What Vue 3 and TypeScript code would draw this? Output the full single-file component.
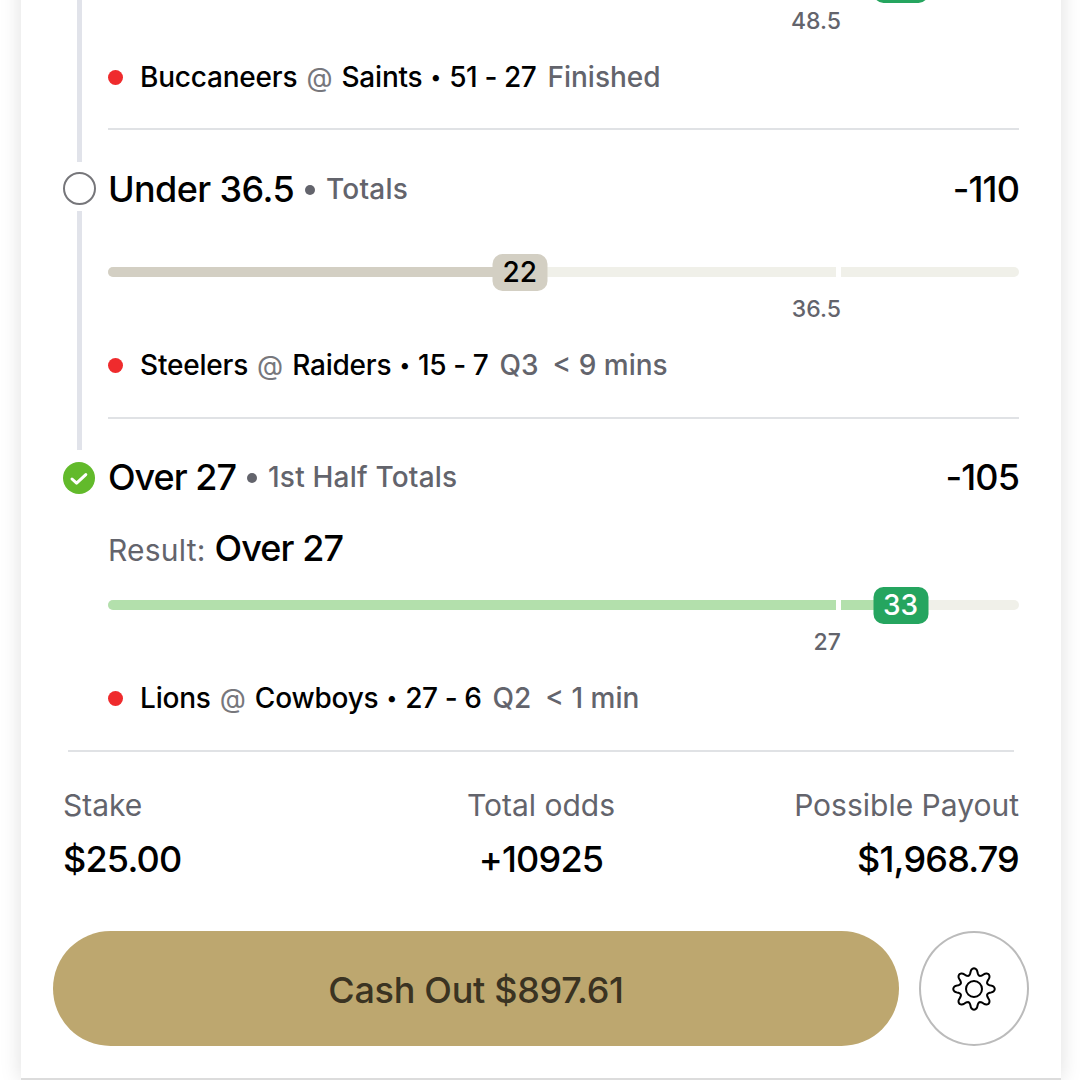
<script setup lang="ts">
interface Leg {
  pick: string
  market: string
  odds: string
  state: 'open' | 'won'
  result?: string
  value: number
  line: string
  valuePct: number
  linePct: number
  tone: 'neutral' | 'green'
  home: string
  away: string
  score: string
  status: string[]
  rail: boolean
}

const legs: Leg[] = [
  { pick: 'Over 48.5', market: 'Totals', odds: '-110', state: 'won', value: 78, line: '48.5', valuePct: 87, linePct: 79.9, tone: 'green', home: 'Buccaneers', away: 'Saints', score: '51 - 27', status: ['Finished'], rail: true },
  { pick: 'Under 36.5', market: 'Totals', odds: '-110', state: 'open', value: 22, line: '36.5', valuePct: 45.2, linePct: 79.9, tone: 'neutral', home: 'Steelers', away: 'Raiders', score: '15 - 7', status: ['Q3', '< 9 mins'], rail: true },
  { pick: 'Over 27', market: '1st Half Totals', odds: '-105', state: 'won', result: 'Over 27', value: 33, line: '27', valuePct: 87, linePct: 79.9, tone: 'green', home: 'Lions', away: 'Cowboys', score: '27 - 6', status: ['Q2', '< 1 min'], rail: false }
]

const stats = [
  { label: 'Stake', value: '$25.00' },
  { label: 'Total odds', value: '+10925' },
  { label: 'Possible Payout', value: '$1,968.79' }
]

function gearPath(): string {
  const pts: string[] = []
  const n = 160
  for (let i = 0; i < n; i++) {
    const a = (i / n) * Math.PI * 2 - Math.PI / 2
    const c = Math.cos(8 * (a + Math.PI / 2))
    const s = Math.sign(c) * Math.pow(Math.abs(c), 0.7)
    const r = 17.5 + 3.2 * s
    pts.push(`${(22 + r * Math.cos(a)).toFixed(2)} ${(22 + r * Math.sin(a)).toFixed(2)}`)
  }
  return 'M' + pts.join('L') + 'Z'
}
const gear = gearPath()
</script>

<template>
  <div class="card">
    <div class="legs">
      <section v-for="leg in legs" :key="leg.home" class="leg" :class="{ 'leg-result': leg.result }">
        <div class="marker-col">
          <svg v-if="leg.state === 'won'" class="marker marker-won" viewBox="0 0 32 32" width="32" height="32">
            <circle cx="16" cy="16" r="16" fill="#62ba2b" />
            <path d="M9 17l4.6 4.2L22.8 12.6" fill="none" stroke="#fff" stroke-width="3" stroke-linecap="round" stroke-linejoin="round" />
          </svg>
          <span v-else class="marker marker-open"></span>
          <span v-if="leg.rail" class="rail"></span>
        </div>
        <div class="leg-body">
          <div class="title-row">
            <div class="title">
              <span class="pick">{{ leg.pick }}</span>
              <span class="market-dot"></span>
              <span class="market">{{ leg.market }}</span>
            </div>
            <span class="odds">{{ leg.odds }}</span>
          </div>
          <div v-if="leg.result" class="result">
            <span class="result-label">Result:</span>
            <span class="result-value">{{ leg.result }}</span>
          </div>
          <div class="slider" :class="`slider-${leg.tone}`">
            <div class="fill" :style="{ width: leg.valuePct + '%' }"></div>
            <span class="tick" :style="{ left: leg.linePct + '%' }"></span>
            <span class="thumb" :style="{ left: leg.valuePct + '%' }">{{ leg.value }}</span>
          </div>
          <div class="line-wrap">
            <span class="line-label" :style="{ left: leg.linePct + '%' }">{{ leg.line }}</span>
          </div>
          <div class="game">
            <span class="live"></span>
            <span class="team">{{ leg.home }}</span>
            <span class="at">@</span>
            <span class="team">{{ leg.away }}</span>
            <span class="bullet">•</span>
            <span class="score">{{ leg.score }}</span>
            <span v-for="s in leg.status" :key="s" class="status">{{ s }}</span>
          </div>
          <div v-if="leg.rail" class="separator"></div>
        </div>
      </section>
    </div>

    <footer class="footer">
      <div class="footer-rule"></div>
      <div class="stats">
        <div v-for="s in stats" :key="s.label" class="stat">
          <span class="stat-label">{{ s.label }}</span>
          <span class="stat-value">{{ s.value }}</span>
        </div>
      </div>
      <div class="actions">
        <button class="cashout" type="button">Cash Out $897.61</button>
        <button class="settings" type="button" aria-label="Settings">
          <svg viewBox="0 0 44 44" width="44" height="44" fill="none" stroke="#000" stroke-width="2">
            <path :d="gear" stroke-linejoin="round" />
            <circle cx="22" cy="22" r="8" />
          </svg>
        </button>
      </div>
    </footer>
  </div>
</template>

<style>
html {
  overflow: hidden;
  background: #fff;
}
body {
  margin: 0;
  background: #fff;
}
</style>

<style scoped>
.card {
  box-sizing: border-box;
  width: 1040px;
  height: 1180px;
  margin: -100px 0 0 21px;
  background: #fff;
  border-bottom: 2px solid #dcdcdc;
  box-shadow: 0 0 20px rgba(0, 0, 0, 0.13);
  overflow: hidden;
  font-family: Inter, "Liberation Sans", sans-serif;
  color: #000;
}
.legs {
  margin-top: -15px;
  padding: 0 42px;
}
.leg {
  display: flex;
  gap: 12px;
}
.marker-col {
  flex: none;
  width: 33px;
  display: flex;
  flex-direction: column;
  align-items: center;
}
.marker {
  flex: none;
  display: block;
}
.marker-won {
  margin: 1px 1px 0 0;
}
.marker-open {
  box-sizing: border-box;
  width: 33px;
  height: 33px;
  margin-top: -1px;
  border: 2.5px solid #76767a;
  border-radius: 50%;
}
.rail {
  flex: 1;
  width: 5px;
  margin: 6px 0 11px;
  background: #e1e3ea;
}
.leg-body {
  flex: 1;
  min-width: 0;
  padding-bottom: 42px;
}
.leg:first-child .leg-body {
  padding-bottom: 43px;
}
.leg-result .leg-body {
  padding-bottom: 0;
}
.title-row {
  display: flex;
  justify-content: space-between;
  align-items: center;
  height: 32px;
}
.title {
  display: flex;
  align-items: center;
}
.pick {
  font-size: 36px;
  font-weight: 500;
  letter-spacing: -0.6px;
}
.leg-result .pick {
  letter-spacing: -1px;
}
.market-dot {
  width: 10px;
  height: 10px;
  margin: 2px 11px 0 11px;
  border-radius: 50%;
  background: #63646c;
}
.market {
  font-size: 28px;
  font-weight: 500;
  letter-spacing: 0.2px;
  color: #63646c;
}
.odds {
  font-size: 36px;
  font-weight: 500;
  letter-spacing: -0.9px;
}
.result {
  display: flex;
  align-items: baseline;
  gap: 9px;
  height: 36px;
  line-height: 36px;
  margin-top: 37px;
}
.result-label {
  font-size: 30px;
  letter-spacing: 0.2px;
  color: #63646c;
}
.result-value {
  font-size: 36px;
  font-weight: 500;
  letter-spacing: -0.9px;
}
.slider {
  position: relative;
  height: 10px;
  margin-top: 62px;
  border-radius: 5px;
  background: #f0f0e9;
}
.leg-result .slider {
  margin-top: 34px;
}
.fill {
  height: 100%;
  border-radius: 5px;
}
.slider-neutral .fill {
  background: #d3cfc3;
}
.slider-green .fill {
  background: #b3e0ac;
}
.tick {
  position: absolute;
  top: 0;
  width: 5px;
  height: 10px;
  background: #fff;
}
.thumb {
  position: absolute;
  top: -13px;
  transform: translateX(-50%);
  box-sizing: border-box;
  width: 55px;
  height: 37px;
  border-radius: 10px;
  font-size: 28px;
  font-weight: 500;
  line-height: 37px;
  text-align: center;
}
.slider-neutral .thumb {
  background: #d3cfc3;
  color: #000;
}
.slider-green .thumb {
  background: #25a55f;
  color: #fff;
}
.line-wrap {
  position: relative;
  height: 24px;
  margin-top: 20px;
}
.line-label {
  position: absolute;
  top: 0;
  transform: translateX(-100%);
  margin-left: 5px;
  font-size: 23px;
  font-weight: 500;
  line-height: 24px;
  color: #63646c;
}
.game {
  display: flex;
  align-items: center;
  height: 32px;
  margin-top: 28px;
  font-size: 28px;
  font-weight: 500;
  gap: 9px;
}
.live {
  flex: none;
  width: 15px;
  height: 15px;
  margin-right: 8px;
  border-radius: 50%;
  background: #ef2b2d;
}
.team {
  letter-spacing: -0.2px;
}
.at {
  color: #77777c;
  font-weight: 400;
  font-size: 27px;
}
.bullet {
  margin: 0 -1px;
  font-size: 20px;
}
.score {
  letter-spacing: -0.4px;
}
.status {
  color: #63646c;
  margin-left: 2px;
}
.status + .status {
  margin-left: 5px;
}
.separator {
  height: 2px;
  margin-top: 36px;
  background: #e0e2e5;
}
.leg:first-child .separator {
  margin-top: 35px;
}
.footer {
  margin-top: 36px;
}
.footer-rule {
  width: 946px;
  height: 2px;
  margin-left: 47px;
  background: #e0e2e5;
}
.stats {
  display: grid;
  grid-template-columns: 1fr auto 1fr;
  padding: 0 42px;
  margin-top: 36px;
}
.stat {
  display: flex;
  flex-direction: column;
  gap: 19px;
}
.stat:nth-child(2) {
  align-items: center;
}
.stat:nth-child(3) {
  align-items: flex-end;
}
.stat-label {
  font-size: 30px;
  line-height: 34px;
  color: #63646c;
}
.stat-value {
  font-size: 36px;
  font-weight: 500;
  line-height: 36px;
  letter-spacing: -0.8px;
}
.actions {
  display: flex;
  gap: 20px;
  padding: 0 32px;
  margin-top: 54px;
}
.cashout {
  flex: 1;
  height: 115px;
  padding: 2px 0 0;
  border: 0;
  border-radius: 58px;
  background: #bda76f;
  color: #3a3322;
  font-family: inherit;
  font-size: 36px;
  font-weight: 500;
  letter-spacing: -0.3px;
}
.settings {
  flex: none;
  box-sizing: border-box;
  display: flex;
  align-items: center;
  justify-content: center;
  width: 110px;
  height: 115px;
  padding: 0;
  border: 2px solid #bbb;
  border-radius: 50%;
  background: #fff;
}
</style>
